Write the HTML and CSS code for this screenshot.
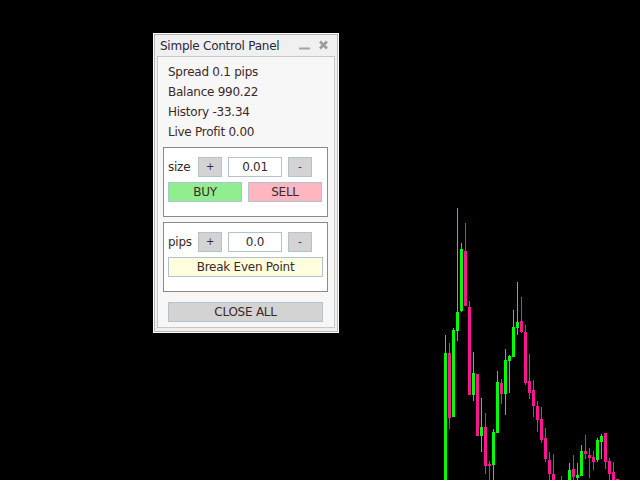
FILE: index.html
```html
<!DOCTYPE html>
<html>
<head>
<meta charset="utf-8">
<title>Simple Control Panel</title>
<link rel="stylesheet" href="styles.css">
</head>
<body>
<svg class="chart" width="640" height="480" viewBox="0 0 640 480">
  <g class="up">
    <rect x="445" y="335" width="1" height="145"/><rect x="444" y="353" width="3" height="127"/>
    <rect x="453" y="328" width="1" height="89"/><rect x="452" y="330" width="3" height="87"/>
    <rect x="457" y="208" width="1" height="133"/><rect x="456" y="312" width="3" height="19"/>
    <rect x="461" y="243" width="1" height="69"/><rect x="460" y="249" width="3" height="62"/>
    <rect x="473" y="352" width="1" height="49"/><rect x="472" y="373" width="3" height="22"/>
    <rect x="481" y="398" width="1" height="54"/><rect x="480" y="427" width="3" height="9"/>
    <rect x="493" y="429" width="1" height="51"/><rect x="492" y="432" width="3" height="33"/>
    <rect x="497" y="371" width="1" height="62"/><rect x="496" y="382" width="3" height="51"/>
    <rect x="505" y="349" width="1" height="66"/><rect x="504" y="360" width="3" height="34"/>
    <rect x="509" y="355" width="1" height="38"/><rect x="508" y="356" width="3" height="5"/>
    <rect x="513" y="310" width="1" height="47"/><rect x="512" y="327" width="3" height="30"/>
    <rect x="517" y="282" width="1" height="53"/><rect x="516" y="322" width="3" height="6"/>
    <rect x="569" y="463" width="1" height="17"/><rect x="568" y="470" width="3" height="10"/>
    <rect x="577" y="463" width="1" height="17"/><rect x="576" y="475" width="3" height="3"/>
    <rect x="581" y="445" width="1" height="31"/><rect x="580" y="451" width="3" height="25"/>
    <rect x="597" y="438" width="1" height="24"/><rect x="596" y="440" width="3" height="20"/>
    <rect x="601" y="434" width="1" height="25"/><rect x="600" y="436" width="3" height="6"/>
  </g>
  <g class="down">
    <rect x="449" y="343" width="1" height="86"/><rect x="448" y="353" width="3" height="65"/>
    <rect x="465" y="223" width="1" height="83"/><rect x="464" y="251" width="3" height="55"/>
    <rect x="469" y="301" width="1" height="94"/><rect x="468" y="307" width="3" height="88"/>
    <rect x="476" y="374" width="3" height="62"/>
    <rect x="485" y="413" width="1" height="61"/><rect x="484" y="427" width="3" height="39"/>
    <rect x="489" y="461" width="1" height="19"/><rect x="488" y="464" width="3" height="2"/>
    <rect x="501" y="379" width="1" height="25"/><rect x="500" y="383" width="3" height="11"/>
    <rect x="521" y="297" width="1" height="36"/><rect x="520" y="321" width="3" height="11"/>
    <rect x="525" y="325" width="1" height="60"/><rect x="524" y="332" width="3" height="51"/>
    <rect x="529" y="354" width="1" height="45"/><rect x="528" y="381" width="3" height="12"/>
    <rect x="533" y="380" width="1" height="37"/><rect x="532" y="390" width="3" height="16"/>
    <rect x="537" y="401" width="1" height="31"/><rect x="536" y="406" width="3" height="14"/>
    <rect x="541" y="407" width="1" height="36"/><rect x="540" y="419" width="3" height="21"/>
    <rect x="545" y="428" width="1" height="34"/><rect x="544" y="438" width="3" height="21"/>
    <rect x="549" y="452" width="1" height="28"/><rect x="548" y="460" width="3" height="14"/>
    <rect x="553" y="454" width="1" height="26"/><rect x="552" y="474" width="3" height="6"/>
    <rect x="561" y="476" width="1" height="4"/>
    <rect x="573" y="455" width="1" height="25"/><rect x="572" y="469" width="3" height="8"/>
    <rect x="585" y="435" width="1" height="24"/><rect x="584" y="451" width="3" height="3"/>
    <rect x="589" y="448" width="1" height="30"/><rect x="588" y="455" width="3" height="3"/>
    <rect x="593" y="451" width="1" height="19"/><rect x="592" y="457" width="3" height="5"/>
    <rect x="605" y="433" width="1" height="36"/><rect x="604" y="433" width="3" height="29"/>
    <rect x="609" y="458" width="1" height="22"/><rect x="608" y="461" width="3" height="13"/>
    <rect x="613" y="462" width="1" height="18"/><rect x="612" y="472" width="3" height="8"/>
    <rect x="616" y="479" width="3" height="1"/>
  </g>
</svg>

<div class="window">
  <div class="frame">
    <div class="caption">
      <span class="title">Simple Control Panel</span>
      <svg class="ic-min" width="11" height="21" viewBox="0 0 11 21"><rect x="0" y="12.5" width="11" height="2"/></svg>
      <svg class="ic-close" width="9" height="21" viewBox="0 0 9 21"><path d="M1 6.5 L8 13.5 M8 6.5 L1 13.5"/></svg>
    </div>
    <div class="client">
      <div class="info">
        <div>Spread 0.1 pips</div>
        <div>Balance 990.22</div>
        <div>History -33.34</div>
        <div>Live Profit 0.00</div>
      </div>
      <div class="group">
        <div class="row">
          <span class="lbl">size</span>
          <span class="btn sm">+</span>
          <span class="btn edit">0.01</span>
          <span class="btn sm">-</span>
        </div>
        <div class="row">
          <span class="btn wide buy">BUY</span>
          <span class="btn wide sell">SELL</span>
        </div>
      </div>
      <div class="group">
        <div class="row">
          <span class="lbl">pips</span>
          <span class="btn sm">+</span>
          <span class="btn edit">0.0</span>
          <span class="btn sm">-</span>
        </div>
        <div class="row">
          <span class="btn full bep">Break Even Point</span>
        </div>
      </div>
      <span class="btn full closeall">CLOSE ALL</span>
    </div>
  </div>
</div>
</body>
</html>
```

FILE: styles.css
```css
html, body {
  margin: 0;
  padding: 0;
}
body {
  width: 640px;
  height: 480px;
  background: #000;
  position: relative;
  overflow: hidden;
  font-family: "DejaVu Sans", sans-serif;
  font-size: 12px;
  letter-spacing: -0.25px;
}
.chart {
  position: absolute;
  left: 0;
  top: 0;
}
.chart .up { fill: #00ff00; }
.chart .down { fill: #ff1493; }

.window {
  position: absolute;
  left: 153px;
  top: 33px;
  width: 186px;
  height: 300px;
  box-sizing: border-box;
  border: 1px solid #ffffff;
  background: #f0f0f0;
}
.frame {
  box-sizing: border-box;
  height: 100%;
  border: 1px solid #b6b6b6;
  padding: 0 2px 3px 2px;
  display: flex;
  flex-direction: column;
}
.caption {
  height: 21px;
  display: flex;
  align-items: flex-start;
  color: #28293b;
  flex: none;
}
.title {
  flex: 1;
  padding: 1px 0 0 3px;
  line-height: 20px;
  white-space: nowrap;
}
.ic-min {
  fill: #a4a4a4;
  margin-right: 9px;
}
.ic-close {
  fill: none;
  stroke: #9c9c9c;
  stroke-width: 2.6;
  margin-right: 7px;
}
.client {
  flex: 1;
  border: 1px solid #c8c8c8;
  background: #f7f7f7;
  padding: 5px 0 5px 5px;
  display: flex;
  flex-direction: column;
  align-items: flex-start;
  color: #3b2928;
}
.info {
  padding-left: 5px;
  line-height: 20px;
}
.group {
  margin-top: 5px;
  width: 165px;
  height: 70px;
  box-sizing: border-box;
  border: 1px solid #8a8a8a;
  background: #ffffff;
  padding: 9px 0 0 4px;
}
.row {
  display: flex;
  align-items: center;
  height: 20px;
}
.row + .row {
  margin-top: 5px;
}
.lbl {
  width: 30px;
  line-height: 20px;
}
.btn {
  display: block;
  box-sizing: border-box;
  height: 20px;
  border: 1px solid #b2c3cf;
  background: #d3d3d3;
  text-align: center;
  line-height: 18px;
  color: #3b2928;
  white-space: nowrap;
}
.sm {
  width: 24px;
  font-size: 10px;
}
.edit {
  width: 54px;
  margin: 0 6px;
  background: #ffffff;
}
.wide { width: 74px; }
.sell { margin-left: 6px; background: #ffb6c1; }
.buy { background: #90ee90; }
.full { width: 155px; }
.bep { background: #ffffe0; }
.closeall {
  margin-top: 10px;
  margin-left: 5px;
}
```
